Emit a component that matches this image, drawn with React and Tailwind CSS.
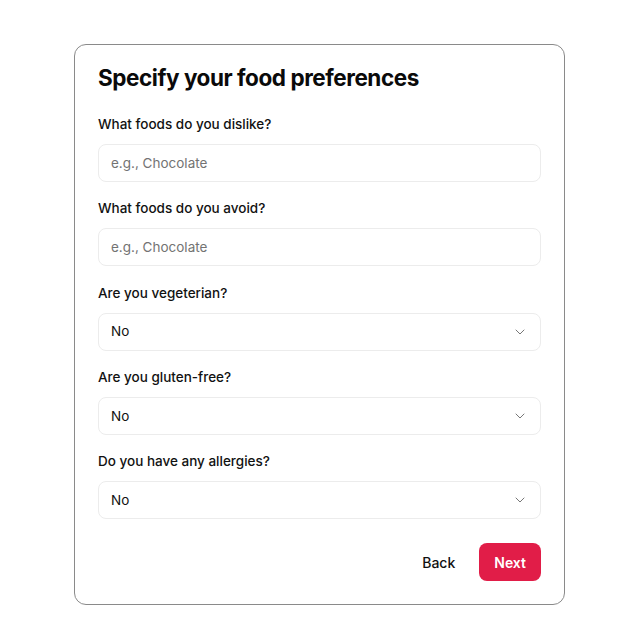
import { ChevronDown } from "lucide-react";

const font = { fontFamily: "Inter, 'Liberation Sans', sans-serif" };

function TextField({ label, placeholder }) {
  return (
    <div className="flex flex-col">
      <label className="text-[13.5px] font-medium leading-5 text-[#111] mb-[10px]">{label}</label>
      <input
        placeholder={placeholder}
        className="h-[38px] w-full rounded-lg border border-[#ececec] bg-white px-3 text-[13.5px] text-[#111] placeholder:text-[#737373] outline-none"
      />
    </div>
  );
}

function SelectField({ label, value }) {
  return (
    <div className="flex flex-col">
      <label className="text-[13.5px] font-medium leading-5 text-[#111] mb-[10px]">{label}</label>
      <div className="flex h-[38px] w-full items-center justify-between rounded-lg border border-[#ececec] bg-white pl-3 pr-3 text-[13.5px] text-[#111]">
        <span>{value}</span>
        <ChevronDown size={16} strokeWidth={1.5} className="text-[#777]" />
      </div>
    </div>
  );
}

export default function App() {
  return (
    <div className="min-h-screen w-full bg-white pt-[44px] pl-[74px]" style={font}>
      <div className="flex w-[491px] h-[561px] flex-col rounded-xl border border-[#8a8a8a] bg-white px-[23px] pt-[17px] pb-6">
        <h1 className="text-[22.5px] font-bold leading-8 tracking-[-0.02em] text-[#0a0a0a]">
          Specify your food preferences
        </h1>
        <div className="mt-5 flex flex-col gap-[16.25px]">
          <TextField label="What foods do you dislike?" placeholder="e.g., Chocolate" />
          <TextField label="What foods do you avoid?" placeholder="e.g., Chocolate" />
          <SelectField label="Are you vegeterian?" value="No" />
          <SelectField label="Are you gluten-free?" value="No" />
          <SelectField label="Do you have any allergies?" value="No" />
        </div>
        <div className="mt-6 flex items-center justify-end gap-2">
          <button className="h-[38px] rounded-lg px-4 text-[14px] font-medium text-[#111]">Back</button>
          <button className="h-[38px] rounded-lg bg-[#e11d48] px-[15px] text-[14px] font-semibold text-white">Next</button>
        </div>
      </div>
    </div>
  );
}
